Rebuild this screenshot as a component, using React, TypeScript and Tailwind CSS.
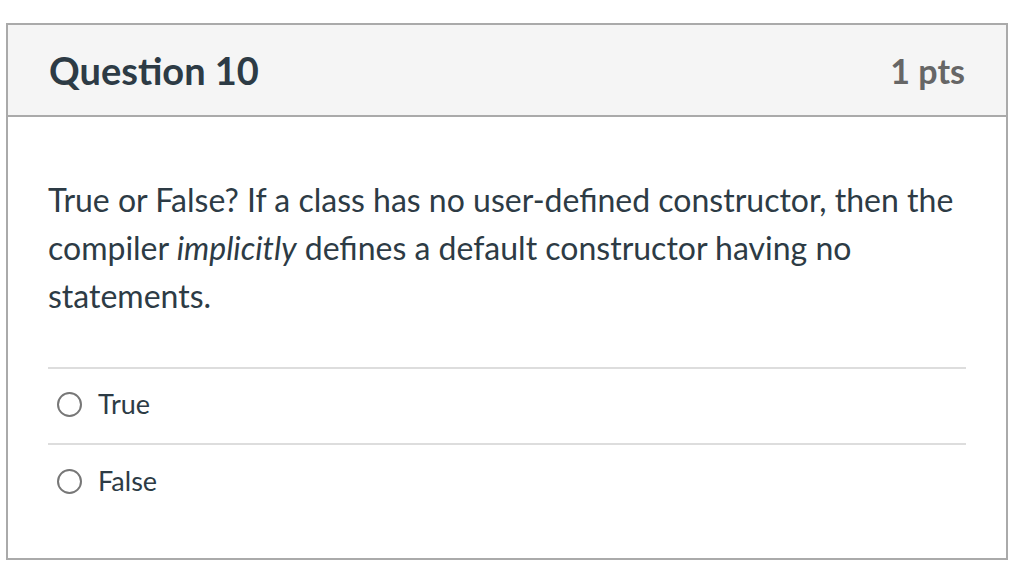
export default function App() {
  const options = ["True", "False"];

  return (
    <div className="w-[1014px] h-[582px] bg-white pt-[23px] pl-[6px] font-['Lato',sans-serif]">
      <div className="w-[1002px] h-[537px] border-2 border-[#aaaaaa] flex flex-col">
        <div className="h-[92px] shrink-0 bg-[#f5f5f5] border-b-2 border-[#aaaaaa] flex items-center justify-between px-[41px]">
          <h2 className="text-[38px] font-bold text-[#2d3b45]">Question 10</h2>
          <span className="text-[34px] font-bold text-[#666666]">1 pts</span>
        </div>
        <div className="px-[40px] pt-[59px]">
          <p className="text-[32px] leading-[48px] text-[#2d3b45]">
            True or False? If a class has no user-defined constructor, then the compiler{" "}
            <em>implicitly</em> defines a default constructor having no statements.
          </p>
          <div className="mt-[47px] border-t-2 border-[#dddddd]">
            {options.map((opt, i) => (
              <div
                key={opt}
                className={`h-[76px] flex items-center gap-[16px] pl-[9px] pb-[3px] ${i === 0 ? "border-b-2 border-[#dddddd]" : ""}`}
              >
                <span className="w-[25px] h-[25px] rounded-full border-2 border-[#777777] bg-white shrink-0" />
                <span className="text-[27px] text-[#2d3b45]">{opt}</span>
              </div>
            ))}
          </div>
        </div>
      </div>
    </div>
  );
}
